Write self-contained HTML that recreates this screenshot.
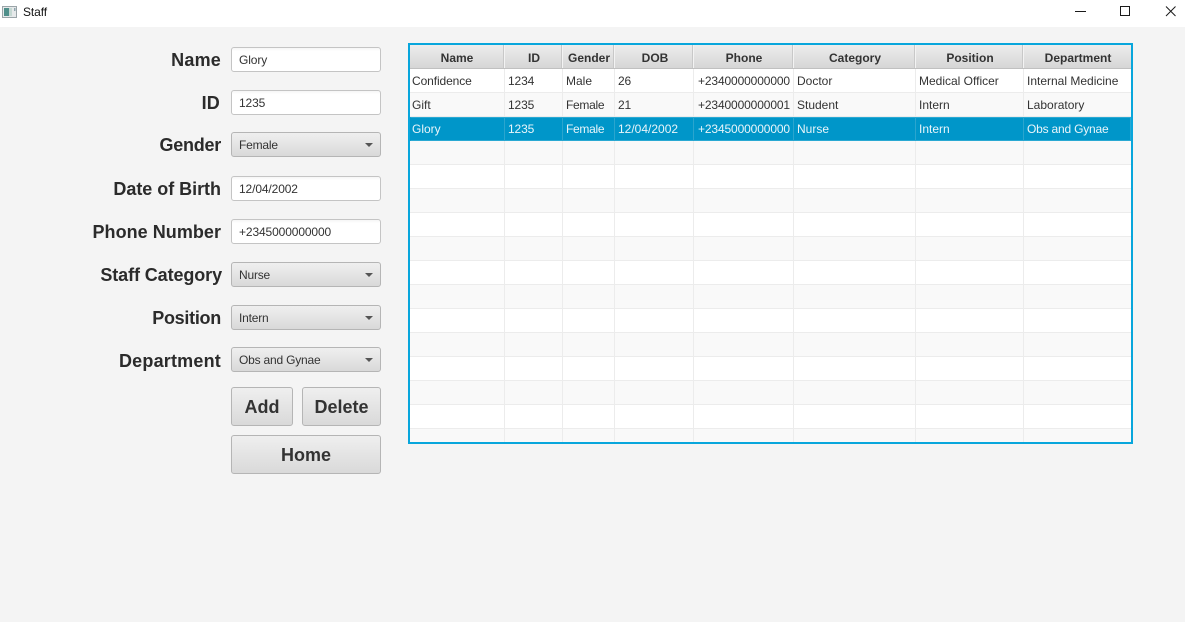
<!DOCTYPE html>
<html><head><meta charset="utf-8"><title>Staff</title>
<style>
*{box-sizing:border-box}
html,body{margin:0;padding:0}
body{width:1185px;height:622px;position:relative;overflow:hidden;background:#f4f4f4;font-family:"Liberation Sans",sans-serif;color:#333}
.a{position:absolute;white-space:nowrap}
.tb{left:0;top:0;width:1185px;height:27px;background:#fff}
.l{font-weight:bold;font-size:18px;line-height:24px;text-align:right;color:#2b2b2b;right:964px}
.f{left:231px;width:150px;height:25px;border:1px solid #c4c4c4;border-radius:3px;background:linear-gradient(#f6f6f6 0,#fff 3px);font-size:12px;line-height:25px;padding-left:7px;color:#333;letter-spacing:-.12px}
.c{left:231px;width:150px;height:25px;border:1px solid #b5b5b5;border-radius:3px;background:linear-gradient(#efefef,#d9d9d9);font-size:12px;line-height:25px;padding-left:7px;color:#333;letter-spacing:-.2px}
.c:after{content:"";position:absolute;right:7px;top:10px;border-left:4px solid transparent;border-right:4px solid transparent;border-top:4px solid #555}
.b{border:1px solid #b5b5b5;border-radius:3px;background:linear-gradient(#efefef,#d9d9d9);font-weight:bold;font-size:18px;text-align:center;color:#333}
.t{left:408px;top:43px;width:725px;height:401px;border:2px solid #08a6dc;background:#fff;overflow:hidden}
.rows{left:0;top:24px;width:721px;height:375px;background:repeating-linear-gradient(#fff 0,#fff 23px,#ececec 23px,#ececec 24px,#f9f9f9 24px,#f9f9f9 47px,#ececec 47px,#ececec 48px)}
.v{top:0;width:1px;height:397px;background:#ececec}
.hd{left:0;top:0;width:721px;height:24px;background:linear-gradient(#ededed,#d6d6d6);border-bottom:1px solid #c0c0c0}
.hs{top:0;width:2px;height:23px;background:#f3f3f3;border-left:1px solid #c8c8c8}
.h{top:0;height:23px;line-height:26px;font-size:12px;font-weight:bold;text-align:center;color:#333}
.sel{left:0;top:72px;width:721px;height:24px;background:#0096c9;border:1px solid #2aa9d3;border-left-color:#0096c9}
.x{font-size:12px;line-height:24px;height:24px;color:#333}
.w{color:#e8f5fa}
.sv{top:72px;width:1px;height:24px;background:#2ba5ce}
.r1{top:24px}.r2{top:48px}.r3{top:72px}
.n{letter-spacing:-.13px}.s{letter-spacing:-.3px}
</style></head><body>
<div class="a tb"></div>
<svg class="a" style="left:2px;top:6px" width="15" height="12" viewBox="0 0 15 12"><rect x=".5" y=".5" width="14" height="11" fill="#e6e9ea" stroke="#9aa4a8"/><rect x="2" y="2" width="5" height="8" fill="#4f8f8a"/><rect x="7" y="2" width="3" height="8" fill="#c5d8d2"/><rect x="12" y="2" width="1.500" height="3" fill="#8fa5ad"/></svg>
<div class="a" style="left:23px;top:5px;font-size:12px;line-height:15px;color:#111;letter-spacing:-.1px">Staff</div>
<svg class="a" style="left:1070px;top:0" width="115" height="27" viewBox="0 0 115 27" fill="none" stroke="#1a1a1a" stroke-width="1"><path d="M5 11.500H16"/><rect x="50.500" y="6.500" width="9" height="9"/><path d="M96 6.500L105.500 16M105.500 6.500L96 16"/></svg>

<div class="a l" style="top:48px;letter-spacing:.2px">Name</div>
<div class="a l" style="top:91px;right:965px;letter-spacing:.2px">ID</div>
<div class="a l" style="top:133px;letter-spacing:-.25px">Gender</div>
<div class="a l" style="top:177px;letter-spacing:-.03px">Date of Birth</div>
<div class="a l" style="top:220px;letter-spacing:.04px">Phone Number</div>
<div class="a l" style="top:263px;right:963px;letter-spacing:-.1px">Staff Category</div>
<div class="a l" style="top:306px;letter-spacing:-.28px">Position</div>
<div class="a l" style="top:349px;letter-spacing:.2px">Department</div>

<div class="a f" style="top:47px">Glory</div>
<div class="a f" style="top:90px">1235</div>
<div class="a c" style="top:132px">Female</div>
<div class="a f" style="top:176px">12/04/2002</div>
<div class="a f" style="top:219px">+2345000000000</div>
<div class="a c" style="top:262px">Nurse</div>
<div class="a c" style="top:305px">Intern</div>
<div class="a c" style="top:347px">Obs and Gynae</div>

<div class="a b" style="left:231px;top:387px;width:62px;height:39px;line-height:38px">Add</div>
<div class="a b" style="left:302px;top:387px;width:79px;height:39px;line-height:38px">Delete</div>
<div class="a b" style="left:231px;top:435px;width:150px;height:39px;line-height:38px">Home</div>

<div class="a t">
<div class="a rows"></div>
<div class="a v" style="left:94px"></div><div class="a v" style="left:152px"></div><div class="a v" style="left:204px"></div><div class="a v" style="left:283px"></div><div class="a v" style="left:383px"></div><div class="a v" style="left:505px"></div><div class="a v" style="left:613px"></div>
<div class="a hd"></div>
<div class="a hs" style="left:93px"></div><div class="a hs" style="left:151px"></div><div class="a hs" style="left:203px"></div><div class="a hs" style="left:282px"></div><div class="a hs" style="left:382px"></div><div class="a hs" style="left:504px"></div><div class="a hs" style="left:612px"></div>
<div class="a h" style="left:0;width:94px">Name</div>
<div class="a h" style="left:95px;width:58px">ID</div>
<div class="a h" style="left:153px;width:52px">Gender</div>
<div class="a h" style="left:205px;width:80px">DOB</div>
<div class="a h" style="left:284px;width:100px">Phone</div>
<div class="a h" style="left:384px;width:122px">Category</div>
<div class="a h" style="left:506px;width:108px">Position</div>
<div class="a h" style="left:614px;width:108px">Department</div>

<div class="a sel"></div>
<div class="a sv" style="left:94px"></div><div class="a sv" style="left:152px"></div><div class="a sv" style="left:204px"></div><div class="a sv" style="left:283px"></div><div class="a sv" style="left:383px"></div><div class="a sv" style="left:505px"></div><div class="a sv" style="left:613px"></div>

<div class="a x r1" style="left:2px;letter-spacing:-.1px">Confidence</div>
<div class="a x r1 n" style="left:98px">1234</div>
<div class="a x r1" style="left:156px">Male</div>
<div class="a x r1 n" style="left:208px">26</div>
<div class="a x r1 n" style="left:288px">+2340000000000</div>
<div class="a x r1" style="left:387px">Doctor</div>
<div class="a x r1" style="left:509px">Medical Officer</div>
<div class="a x r1" style="left:617px">Internal Medicine</div>

<div class="a x r2" style="left:2px">Gift</div>
<div class="a x r2 n" style="left:98px">1235</div>
<div class="a x r2 s" style="left:156px">Female</div>
<div class="a x r2 n" style="left:208px">21</div>
<div class="a x r2 n" style="left:288px">+2340000000001</div>
<div class="a x r2" style="left:387px">Student</div>
<div class="a x r2" style="left:509px">Intern</div>
<div class="a x r2" style="left:617px">Laboratory</div>

<div class="a x r3 w" style="left:2px">Glory</div>
<div class="a x r3 w n" style="left:98px">1235</div>
<div class="a x r3 w s" style="left:156px">Female</div>
<div class="a x r3 w" style="left:208px">12/04/2002</div>
<div class="a x r3 w n" style="left:288px">+2345000000000</div>
<div class="a x r3 w" style="left:387px">Nurse</div>
<div class="a x r3 w" style="left:509px">Intern</div>
<div class="a x r3 w" style="left:617px;letter-spacing:-.2px">Obs and Gynae</div>
</div>
</body></html>
